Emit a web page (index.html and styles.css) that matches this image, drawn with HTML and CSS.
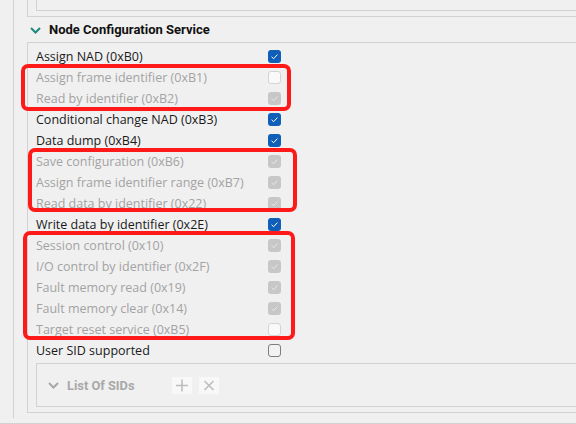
FILE: index.html
```html
<!DOCTYPE html>
<html>
<head>
<meta charset="utf-8">
<link rel="stylesheet" href="styles.css">
</head>
<body>
<div class="page">
  <div class="panel">
    <div class="prev-group"><div class="prev-inner"></div></div>
    <div class="section-header">
      <svg class="chev" width="11" height="7" viewBox="0 0 11 7"><polyline points="1,1 5.5,5.5 10,1" fill="none" stroke="#1f8a7c" stroke-width="2"/></svg>
      <span class="section-title">Node Configuration Service</span>
    </div>
    <div class="section-body">
      <div class="row"><span class="lbl">Assign NAD (0xB0)</span><span class="cb on"><svg viewBox="0 0 13 13"><polyline points="3.6,6.8 5.6,8.7 9.4,4.6"/></svg></span></div>
      <div class="row dis"><span class="lbl">Assign frame identifier (0xB1)</span><span class="cb off"></span></div>
      <div class="row dis"><span class="lbl">Read by identifier (0xB2)</span><span class="cb on"><svg viewBox="0 0 13 13"><polyline points="3.6,6.8 5.6,8.7 9.4,4.6"/></svg></span></div>
      <div class="row"><span class="lbl">Conditional change NAD (0xB3)</span><span class="cb on"><svg viewBox="0 0 13 13"><polyline points="3.6,6.8 5.6,8.7 9.4,4.6"/></svg></span></div>
      <div class="row"><span class="lbl">Data dump (0xB4)</span><span class="cb on"><svg viewBox="0 0 13 13"><polyline points="3.6,6.8 5.6,8.7 9.4,4.6"/></svg></span></div>
      <div class="row dis"><span class="lbl">Save configuration (0xB6)</span><span class="cb on"><svg viewBox="0 0 13 13"><polyline points="3.6,6.8 5.6,8.7 9.4,4.6"/></svg></span></div>
      <div class="row dis"><span class="lbl">Assign frame identifier range (0xB7)</span><span class="cb on"><svg viewBox="0 0 13 13"><polyline points="3.6,6.8 5.6,8.7 9.4,4.6"/></svg></span></div>
      <div class="row dis"><span class="lbl">Read data by identifier (0x22)</span><span class="cb on"><svg viewBox="0 0 13 13"><polyline points="3.6,6.8 5.6,8.7 9.4,4.6"/></svg></span></div>
      <div class="row"><span class="lbl">Write data by identifier (0x2E)</span><span class="cb on"><svg viewBox="0 0 13 13"><polyline points="3.6,6.8 5.6,8.7 9.4,4.6"/></svg></span></div>
      <div class="row dis"><span class="lbl">Session control (0x10)</span><span class="cb on"><svg viewBox="0 0 13 13"><polyline points="3.6,6.8 5.6,8.7 9.4,4.6"/></svg></span></div>
      <div class="row dis"><span class="lbl">I/O control by identifier (0x2F)</span><span class="cb on"><svg viewBox="0 0 13 13"><polyline points="3.6,6.8 5.6,8.7 9.4,4.6"/></svg></span></div>
      <div class="row dis"><span class="lbl">Fault memory read (0x19)</span><span class="cb on"><svg viewBox="0 0 13 13"><polyline points="3.6,6.8 5.6,8.7 9.4,4.6"/></svg></span></div>
      <div class="row dis"><span class="lbl">Fault memory clear (0x14)</span><span class="cb on"><svg viewBox="0 0 13 13"><polyline points="3.6,6.8 5.6,8.7 9.4,4.6"/></svg></span></div>
      <div class="row dis"><span class="lbl">Target reset service (0xB5)</span><span class="cb off"></span></div>
      <div class="row"><span class="lbl">User SID supported</span><span class="cb off"></span></div>
      <div class="list-box">
        <svg class="chev" width="11" height="7" viewBox="0 0 11 7"><polyline points="1,1 5.5,5.5 10,1" fill="none" stroke="#a8a8a8" stroke-width="2"/></svg>
        <span class="list-title">List Of SIDs</span>
        <span class="btn btn-add"><svg width="20" height="17" viewBox="0 0 20 17"><path d="M10 2.5v12M4 8.5h12" stroke="#bdbdbd" stroke-width="1.6" fill="none"/></svg></span>
        <span class="btn"><svg width="20" height="17" viewBox="0 0 20 17"><path d="M5.5 4l9 9M14.5 4l-9 9" stroke="#bdbdbd" stroke-width="1.6" fill="none"/></svg></span>
      </div>
    </div>
  </div>
  <div class="mark mark1"></div>
  <div class="mark mark2"></div>
  <div class="mark mark3"></div>
</div>
</body>
</html>
```

FILE: styles.css
```css
html, body {
  margin: 0;
  padding: 0;
  background: #f0f0f0;
}
.page {
  position: relative;
  width: 576px;
  height: 424px;
  overflow: hidden;
  background: #f0f0f0;
  font-family: "Open Sans", "Noto Sans", sans-serif;
  font-size: 12.5px;
  color: #1a1a1a;
  border-bottom: 1px solid #d2d2d2;
  box-sizing: border-box;
}
.panel {
  margin-left: 13px;
  width: 700px;
  height: 418px;
  border-left: 1px solid #d2d2d2;
  padding-left: 13px;
  box-sizing: border-box;
}
.prev-group {
  width: 700px;
  height: 17px;
  border-left: 1px solid #d2d2d2;
  border-bottom: 1px solid #d2d2d2;
  box-sizing: border-box;
  padding-left: 8px;
}
.prev-inner {
  height: 11px;
  border-left: 1px solid #d2d2d2;
  border-bottom: 1px solid #d2d2d2;
  box-sizing: border-box;
}
.section-header {
  height: 25px;
  display: flex;
  align-items: center;
  padding-left: 3px;
  gap: 8px;
}
.section-header .chev {
  margin-top: 1px;
}
.section-title {
  font-family: "Roboto", "Open Sans", sans-serif;
  font-weight: 700;
  font-size: 13px;
  color: #111;
}
.section-body {
  width: 700px;
  height: 371px;
  border: 1px solid #d2d2d2;
  border-right: none;
  box-sizing: border-box;
  padding: 3px 0 0 8px;
}
.row {
  display: grid;
  grid-template-columns: 232px 13px;
  align-items: center;
  height: 21px;
}
.lbl {
  line-height: 21px;
  white-space: nowrap;
}
.row.dis .lbl {
  color: #a3a3a3;
}
.cb {
  width: 13px;
  height: 13px;
  box-sizing: border-box;
  border-radius: 3px;
  display: block;
}
.cb svg {
  display: block;
  width: 13px;
  height: 13px;
}
.cb svg polyline {
  fill: none;
  stroke: #ffffff;
  stroke-width: 1;
}
.cb.on {
  background: #0f5fb8;
}
.row.dis .cb.on {
  background: #c7c7c7;
}
.row.dis .cb.on svg polyline {
  stroke: #e9e9e9;
}
.cb.off {
  border: 1px solid #7e7e7e;
  background: #f2f2f2;
}
.row.dis .cb.off {
  border-color: #d4d4d4;
  background: #f9f9f9;
}
.list-box {
  margin-top: 2px;
  height: 44px;
  border: 1px solid #d2d2d2;
  border-right: none;
  box-sizing: border-box;
  display: flex;
  align-items: center;
  padding-left: 11px;
}
.list-box .chev {
  margin-right: 8px;
}
.list-title {
  font-family: "Roboto", "Open Sans", sans-serif;
  font-weight: 700;
  font-size: 12.8px;
  color: #a8a8a8;
  width: 105px;
}
.btn {
  width: 20px;
  height: 17px;
  background: #f8f8f8;
  margin-right: 7px;
  display: block;
}
.btn svg {
  display: block;
}
.mark {
  position: absolute;
  border: 4px solid #ff1a1a;
  border-radius: 7px;
  box-sizing: border-box;
}
.mark1 { left: 21px; top: 64px; width: 270px; height: 47px; }
.mark2 { left: 28px; top: 148px; width: 269px; height: 64px; }
.mark3 { left: 23px; top: 231px; width: 272px; height: 109px; }
```
